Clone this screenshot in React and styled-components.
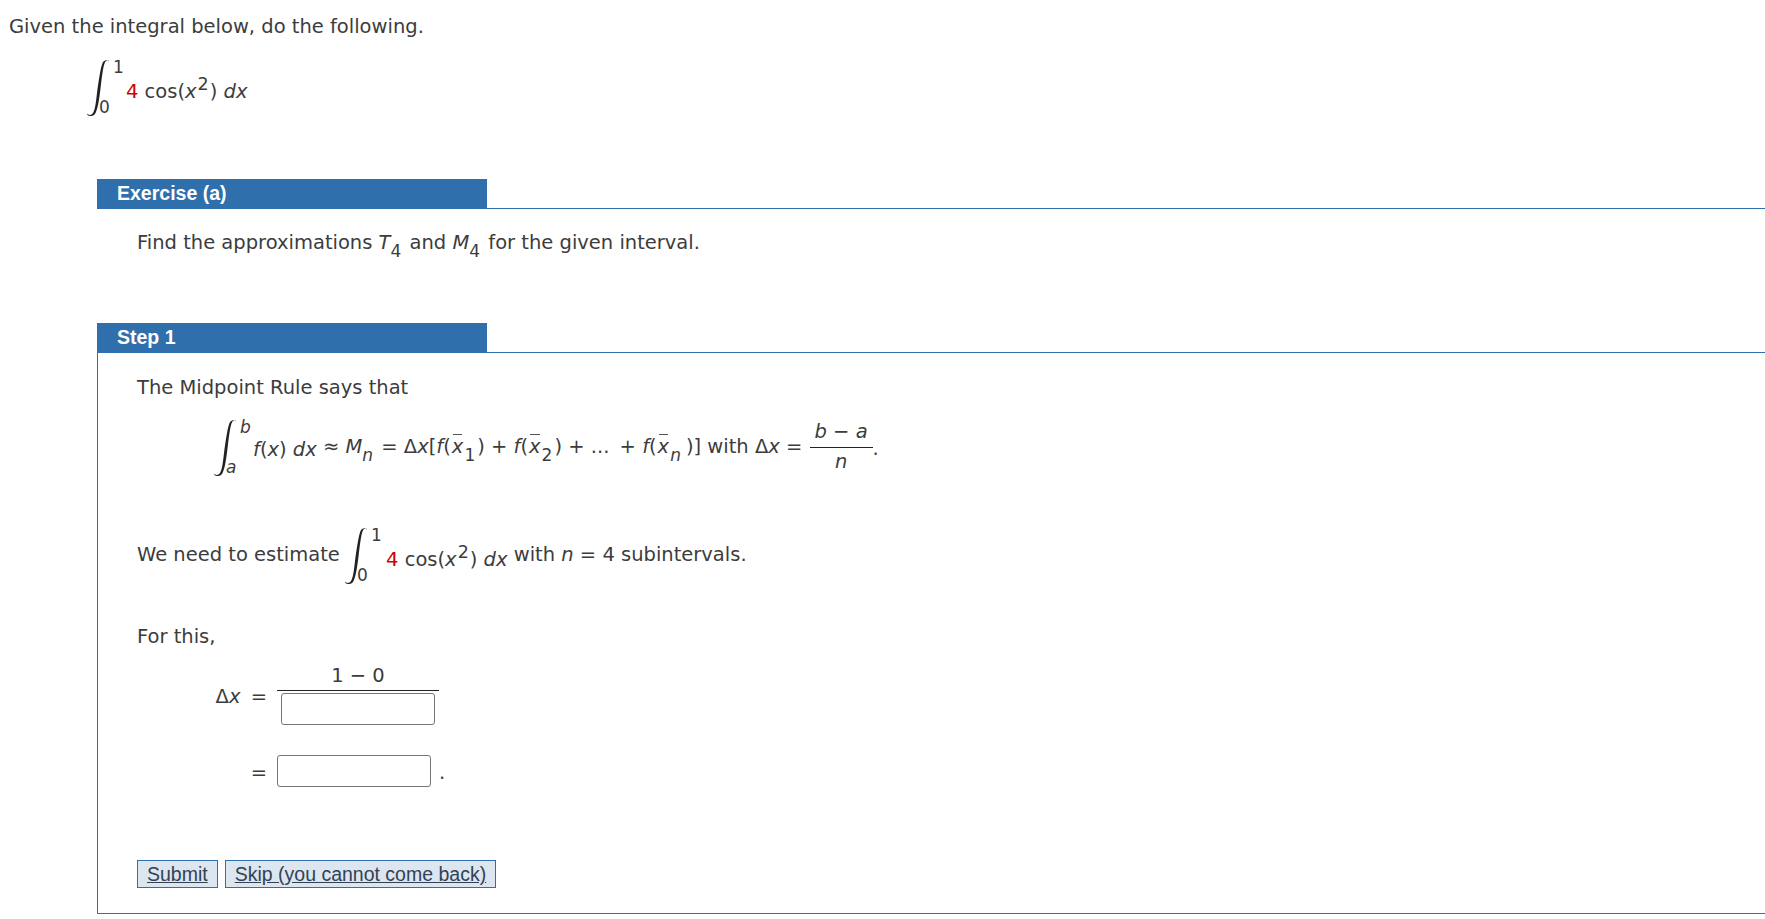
import React from 'react'
import styled, { createGlobalStyle } from 'styled-components'

const BLUE = '#2f6fab'
const TEXT = '#3c3c3c'

const GlobalStyle = createGlobalStyle`
  html, body {
    margin: 0;
    background: #fff;
  }
  body {
    color: ${TEXT};
    font-family: "DejaVu Sans", Verdana, sans-serif;
    font-size: 19.5px;
    line-height: 24px;
    overflow: hidden;
  }
`

const Page = styled.div`
  width: 1765px;
  height: 919px;
  overflow: hidden;
  padding-top: 15px;
  box-sizing: border-box;
`

const Para = styled.p`
  margin: 0;
  height: 24px;
  white-space: nowrap;
`

const Lead = styled(Para)`
  padding-left: 9px;
`

const MathRow = styled.div`
  display: flex;
  align-items: center;
  white-space: pre;
  height: 56px;
`

const LeadIntegral = styled(MathRow)`
  margin: 20px 0 64px 86px;
`

const Section = styled.section`
  margin-left: 97px;
`

const SectionHeader = styled.div`
  height: 30px;
  box-sizing: border-box;
  border-bottom: 1px solid ${BLUE};
`

const SectionTitle = styled.div`
  width: 390px;
  height: 30px;
  box-sizing: border-box;
  padding-left: 20px;
  background: ${BLUE};
  color: #fff;
  font-family: "Liberation Sans", Arial, sans-serif;
  font-weight: 700;
  font-size: 19.5px;
  line-height: 28px;
`

const ExerciseBody = styled.div`
  padding: 22px 0 68px 40px;
`

const StepBody = styled.div`
  border-left: 1px solid ${BLUE};
  border-bottom: 1px solid ${BLUE};
  padding: 23px 0 25px 39px;
`

const FormulaRow = styled(MathRow)`
  margin: 19px 0 52px 76px;
`

const EstimateRow = styled(MathRow)`
  margin-bottom: 42px;
`

const Var = styled.i`
  font-style: italic;
`

const Red = styled.span`
  color: #d00000;
`

const Sub = styled.sub`
  font-size: 17px;
  line-height: 0;
  vertical-align: -8px;
  margin-right: ${({ $after }) => $after || 2}px;
`

const Sup = styled.sup`
  font-size: 17.5px;
  line-height: 0;
  vertical-align: 8px;
  margin: 0 1px;
`

const Shifted = styled.span`
  padding-top: ${({ $down }) => $down || 0}px;
`

const Lowered = styled.span`
  line-height: 0;
  vertical-align: -3px;
`

const Dots = styled.span`
  margin-right: 4px;
`

const Mean = styled.span`
  position: relative;
  padding: 0 1px;
  font-style: italic;
  &::before {
    content: '';
    position: absolute;
    left: 2px;
    right: 2px;
    top: -1px;
    height: 1px;
    background: #555;
  }
`

const IntegralBox = styled.span`
  position: relative;
  display: inline-block;
  flex: none;
  width: 40px;
  height: 56px;
  margin: 0 ${({ $shift }) => $shift || 0}px 0 ${({ $shift }) => -($shift || 0)}px;
`

const IntegralSign = styled.svg`
  display: block;
  width: 24px;
  height: 57px;
`

const Limit = styled.span`
  position: absolute;
  font-size: 17px;
  line-height: 16px;
  left: ${({ $left }) => $left}px;
  ${({ $top }) => ($top ? 'top: 0;' : 'bottom: 0;')}
`

const Integral = ({ upper, lower, italic, shift }) => (
  <IntegralBox $shift={shift}>
    <IntegralSign viewBox="0 0 24 57" aria-hidden="true">
      <path
        d="M23 2.5C21.500.5 18 .5 16.500 4c-2 5-3.500 16-5 26C10 42 9.500 50 7 54c-1.500 2.500-4.500 2.500-6 .5l.5 1.500c2 1.500 5.500 1.500 7.500-1 2.500-4 4-13 5.500-25.500 1.500-12 2.500-21 4-25 1-3 3-3.500 4.500-2.500z"
        fill="#222"
      />
    </IntegralSign>
    <Limit $top $left={27}>{italic ? <Var>{upper}</Var> : upper}</Limit>
    <Limit $left={13}>{italic ? <Var>{lower}</Var> : lower}</Limit>
  </IntegralBox>
)

const Fraction = styled.span`
  display: inline-flex;
  flex-direction: column;
  align-items: center;
  flex: none;
  width: ${({ $width }) => $width}px;
  margin-left: ${({ $gap }) => $gap || 0}px;
`

const Numerator = styled.span`
  align-self: stretch;
  text-align: center;
  padding-bottom: 3px;
  border-bottom: 1px solid #222;
`

const Denominator = styled.span`
  padding-top: 2px;
  font-style: italic;
`

const Lesson = styled.div`
  margin: 15px 0 0 79px;
  display: grid;
  grid-template-columns: 51px 162px;
  column-gap: 10px;
  align-items: center;
  justify-items: start;
`

const EqLabel = styled.span`
  justify-self: end;
  white-space: pre;
  padding-top: ${({ $down }) => $down || 0}px;
`

const EqGap = styled.span`
  margin-left: 4px;
`

const AnswerNumerator = styled.span`
  align-self: stretch;
  text-align: center;
  height: 26px;
  line-height: 24px;
  border-bottom: 1px solid #222;
`

const AnswerInput = styled.input`
  display: block;
  width: 154px;
  height: 32px;
  box-sizing: border-box;
  border: 1px solid #767676;
  border-radius: 3px;
  padding: 0 4px;
  background: #fff;
  font-size: 16px;
`

const FractionInput = styled(AnswerInput)`
  margin-top: 2px;
`

const ResultCell = styled.span`
  display: flex;
  align-items: center;
  grid-column: 2;
  margin-top: 30px;
`

const ResultLabel = styled(EqLabel)`
  margin-top: 30px;
`

const Period = styled.span`
  margin-left: 8px;
  padding-top: 4px;
`

const Actions = styled.div`
  display: flex;
  gap: 7px;
  margin-top: 73px;
`

const ActionButton = styled.button`
  height: 28px;
  box-sizing: border-box;
  padding: 0 9px;
  border: 1px solid ${BLUE};
  background: #dce6f0;
  color: #334155;
  font-family: "Liberation Sans", Arial, sans-serif;
  font-size: 19.5px;
  line-height: 26px;
  text-decoration: underline;
`

const App = () => (
  <Page>
    <GlobalStyle />
    <Lead>Given the integral below, do the following.</Lead>
    <LeadIntegral>
      <Integral upper="1" lower="0" />
      <Shifted $down={10}>
        <Red>4</Red> cos(<Var>x</Var><Sup>2</Sup>) <Var>dx</Var>
      </Shifted>
    </LeadIntegral>

    <Section>
      <SectionHeader>
        <SectionTitle>Exercise (a)</SectionTitle>
      </SectionHeader>
      <ExerciseBody>
        <Para>
          Find the approximations <Var>T</Var><Sub>4</Sub> and <Var>M</Var><Sub>4</Sub> for the given interval.
        </Para>
      </ExerciseBody>
    </Section>

    <Section>
      <SectionHeader>
        <SectionTitle>Step 1</SectionTitle>
      </SectionHeader>
      <StepBody>
        <Para>The Midpoint Rule says that</Para>
        <FormulaRow>
          <Integral upper="b" lower="a" italic />
          <span>
            <Lowered><Var>f</Var>(<Var>x</Var>) <Var>dx</Var></Lowered> ≈ <Var>M</Var><Sub><Var>n</Var></Sub> = Δ<Var>x</Var>[<Var>f</Var>(<Mean>x</Mean><Sub>1</Sub>) + <Var>f</Var>(<Mean>x</Mean><Sub>2</Sub>) + <Dots>...</Dots> + <Var>f</Var>(<Mean>x</Mean><Sub $after={5}><Var>n</Var></Sub>)] with Δ<Var>x</Var> ={' '}
          </span>
          <Fraction $width={63} $gap={1}>
            <Numerator><Var>b</Var> − <Var>a</Var></Numerator>
            <Denominator>n</Denominator>
          </Fraction>
          <Shifted $down={4}>.</Shifted>
        </FormulaRow>
        <EstimateRow>
          <span>We need to estimate </span>
          <Integral upper="1" lower="0" shift={2} />
          <Shifted $down={10}>
            <Red>4</Red> cos(<Var>x</Var><Sup>2</Sup>) <Var>dx</Var>
          </Shifted>
          <span> with <Var>n</Var> = 4 subintervals.</span>
        </EstimateRow>
        <Para>For this,</Para>
        <Lesson>
          <EqLabel $down={4}>Δ<Var>x</Var> <EqGap>=</EqGap></EqLabel>
          <Fraction $width={162}>
            <AnswerNumerator>1 − 0</AnswerNumerator>
            <FractionInput type="text" />
          </Fraction>
          <ResultLabel $down={4}>=</ResultLabel>
          <ResultCell>
            <AnswerInput type="text" />
            <Period>.</Period>
          </ResultCell>
        </Lesson>
        <Actions>
          <ActionButton type="button">Submit</ActionButton>
          <ActionButton type="button">Skip (you cannot come back)</ActionButton>
        </Actions>
      </StepBody>
    </Section>
  </Page>
)

export default App
